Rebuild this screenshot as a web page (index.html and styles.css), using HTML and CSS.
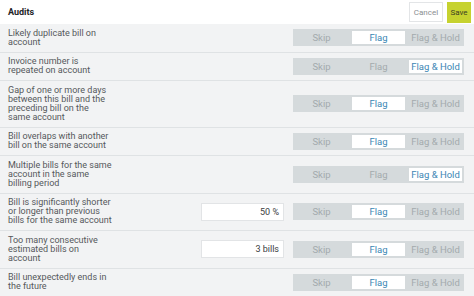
FILE: index.html
```html
<!DOCTYPE html>
<html>
<head>
<meta charset="utf-8">
<link rel="stylesheet" href="styles.css">
</head>
<body>
<div class="panel">
  <div class="header">
    <div class="title">Audits</div>
    <div class="actions">
      <button class="btn cancel">Cancel</button>
      <button class="btn save">Save</button>
    </div>
  </div>
  <div class="row">
    <div class="label">Likely duplicate bill on account</div>
    <div class="controls">
      <div class="seg"><span>Skip</span><span class="on">Flag</span><span>Flag &amp; Hold</span></div>
    </div>
  </div>
  <div class="row">
    <div class="label">Invoice number is repeated on account</div>
    <div class="controls">
      <div class="seg"><span>Skip</span><span>Flag</span><span class="on">Flag &amp; Hold</span></div>
    </div>
  </div>
  <div class="row">
    <div class="label">Gap of one or more days between this bill and the preceding bill on the same account</div>
    <div class="controls">
      <div class="seg"><span>Skip</span><span class="on">Flag</span><span>Flag &amp; Hold</span></div>
    </div>
  </div>
  <div class="row">
    <div class="label">Bill overlaps with another bill on the same account</div>
    <div class="controls">
      <div class="seg"><span>Skip</span><span class="on">Flag</span><span>Flag &amp; Hold</span></div>
    </div>
  </div>
  <div class="row">
    <div class="label">Multiple bills for the same account in the same billing period</div>
    <div class="controls">
      <div class="seg"><span>Skip</span><span>Flag</span><span class="on">Flag &amp; Hold</span></div>
    </div>
  </div>
  <div class="row">
    <div class="label">Bill is significantly shorter or longer than previous bills for the same account</div>
    <div class="controls">
      <div class="input">50 %</div>
      <div class="seg"><span>Skip</span><span class="on">Flag</span><span>Flag &amp; Hold</span></div>
    </div>
  </div>
  <div class="row">
    <div class="label">Too many consecutive estimated bills on account</div>
    <div class="controls">
      <div class="input">3 bills</div>
      <div class="seg"><span>Skip</span><span class="on">Flag</span><span>Flag &amp; Hold</span></div>
    </div>
  </div>
  <div class="row">
    <div class="label">Bill unexpectedly ends in the future</div>
    <div class="controls">
      <div class="seg"><span>Skip</span><span class="on">Flag</span><span>Flag &amp; Hold</span></div>
    </div>
  </div>
</div>
</body>
</html>
```
FILE: styles.css
```css
html, body {
  margin: 0;
  padding: 0;
  background: #ffffff;
}
body {
  font-family: Roboto, "Liberation Sans", sans-serif;
  font-size: 9px;
  color: #55585b;
  width: 474px;
  height: 296px;
  overflow: hidden;
}
.header {
  height: 24px;
  display: flex;
  align-items: center;
  justify-content: space-between;
  padding: 0 3px 0 8px;
  background: #ffffff;
  box-sizing: border-box;
}
.title {
  font-weight: bold;
  color: #222426;
  font-size: 9px;
}
.actions {
  display: flex;
  gap: 4px;
  align-items: center;
}
.btn {
  font-family: Roboto, "Liberation Sans", sans-serif;
  font-size: 8px;
  height: 20px;
  padding: 0;
  border: 1px solid #e3e5e7;
  background: #ffffff;
  color: #8a8e91;
  box-sizing: border-box;
}
.cancel {
  width: 34px;
}
.save {
  width: 24px;
  height: 21px;
  background: #c6d22f;
  border-color: #c6d22f;
  color: #3b3f22;
}
.row {
  display: flex;
  align-items: center;
  padding: 4.75px 10px 4.75px 8px;
  background: #f2f3f4;
  border-bottom: 1px solid #dfe2e4;
}
.label {
  width: 105px;
  line-height: 9px;
  color: #55585b;
}
.controls {
  margin-left: auto;
  display: flex;
  align-items: center;
  gap: 9px;
}
.input {
  width: 83px;
  height: 18px;
  box-sizing: border-box;
  background: #ffffff;
  border: 1px solid #e2e4e6;
  text-align: right;
  padding-right: 4px;
  line-height: 16px;
  color: #3a3d40;
}
.seg {
  width: 171px;
  height: 17px;
  box-sizing: border-box;
  padding: 2px;
  background: #d5dadc;
  display: flex;
  gap: 4px;
}
.seg span {
  flex: 1;
  text-align: center;
  line-height: 13px;
  font-size: 9.5px;
  color: #a3aaad;
}
.seg span.on {
  background: #ffffff;
  color: #3b86b4;
}
```
